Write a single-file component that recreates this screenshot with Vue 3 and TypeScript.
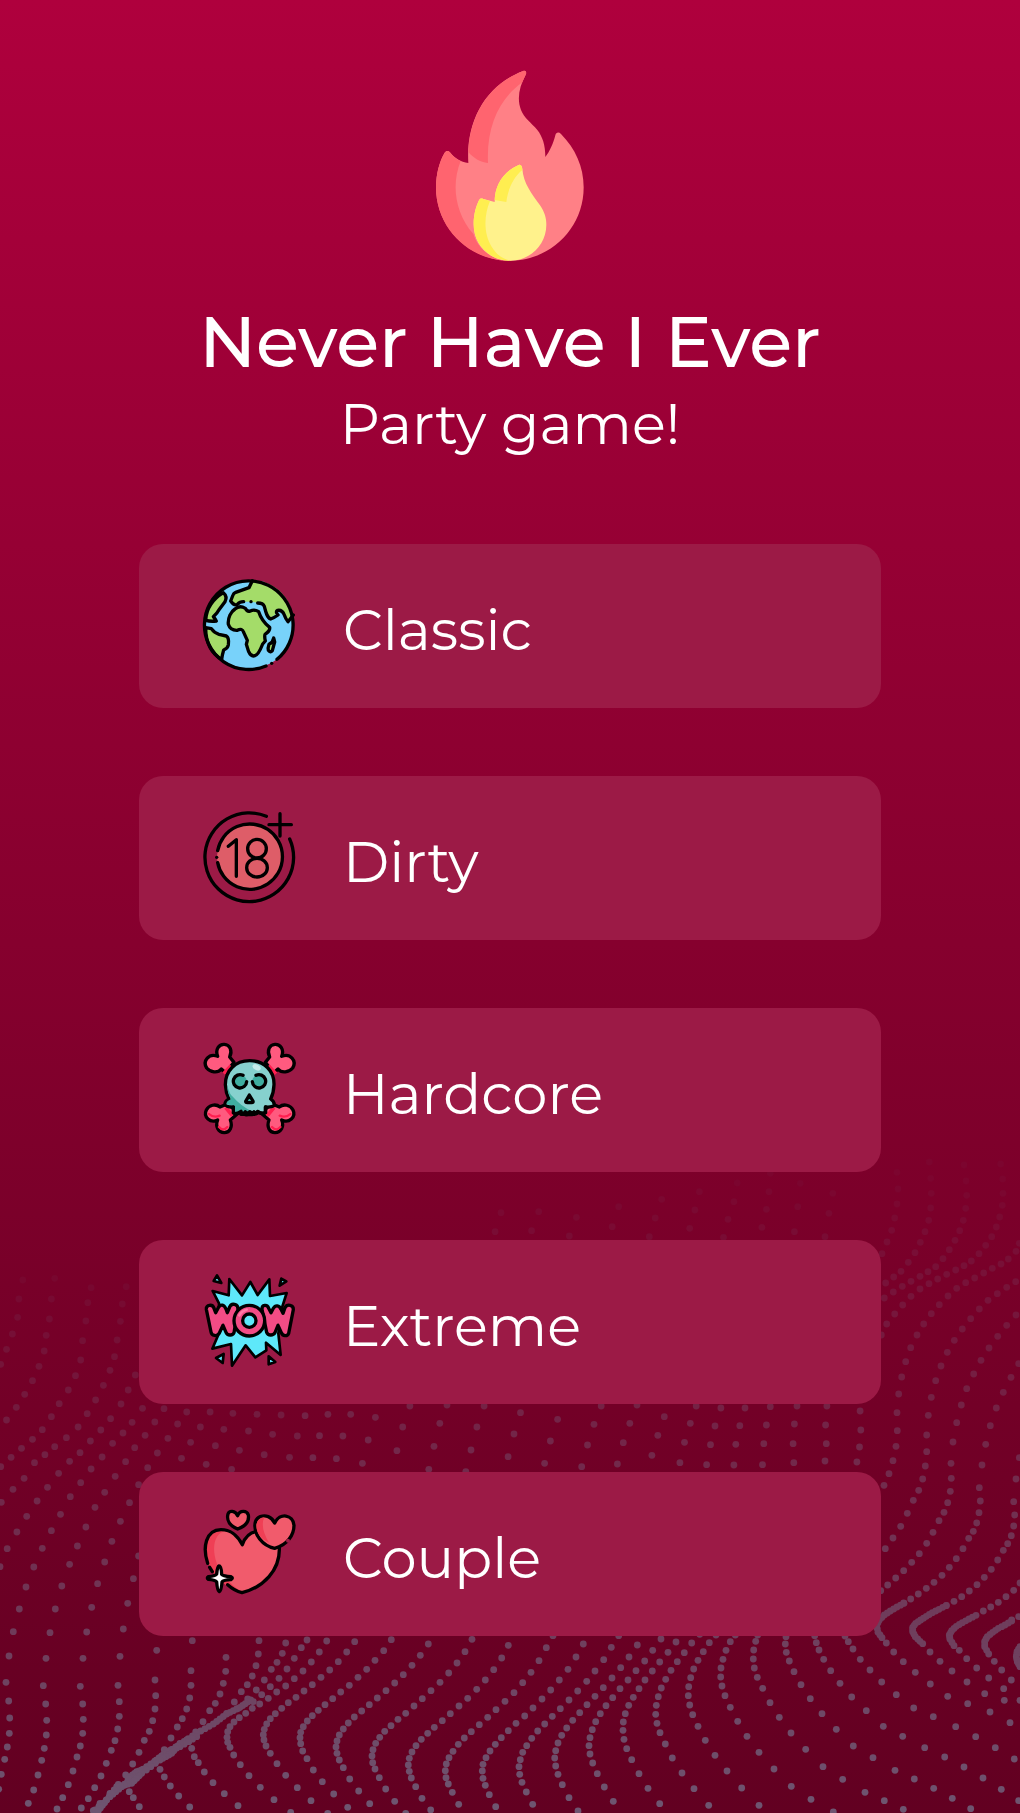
<script setup lang="ts">
interface Mode {
  id: string
  label: string
}

interface Dot {
  x: number
  y: number
  color: string
}

/* A group of dot trails drawn in its own coordinate space. */
interface Patch {
  x: number
  y: number
  sx: number
  sy: number
  steps: number
  trails: string[]
}

const modes: Mode[] = [
  { id: 'classic', label: 'Classic' },
  { id: 'dirty', label: 'Dirty' },
  { id: 'hardcore', label: 'Hardcore' },
  { id: 'extreme', label: 'Extreme' },
  { id: 'couple', label: 'Couple' },
]

const patches: Patch[] = [
  {
    x: 0, y: 600, sx: 3, sy: 3, steps: 1,
    trails: [
      '58,27 40,95 27,168 18,247 26,303 29,354 28,400 22,441 14,478 4,523 -4,568',
      '166,27 150,98 138,175 130,257 137,312 140,361 139,405 133,445 125,481 114,525 101,570 85,610',
      '275,22 260,96 249,175 241,259 248,312 250,358 248,400 241,438 231,471 219,513 205,554 188,593 171,627',
      '383,10 370,87 360,169 354,256 358,305 358,349 353,387 345,422 334,451 319,490 303,528 284,563 265,596 244,624',
      '470,151 465,240 467,287 465,327 458,362 448,394 433,421 417,457 398,492 377,525 355,553 330,580 300,610 280,632',
      '577,122 573,212 573,256 569,294 560,327 547,356 532,381 513,414 493,449 468,483',
      '678,172 677,214 670,250 660,282 646,310 629,332 609,365 587,396 560,420',
      '777,122 775,162 768,197 757,228 742,254 724,275 703,306 680,340',
      '857,129 847,160 831,187 814,208 793,240 769,270 743,297 715,325',
      '921,120 904,143 883,175 861,207 837,235 811,260 785,284 760,305',
      '980,123 958,156 934,186 909,213 883,236 857,258 830,276 805,295 779,312 757,325 737,340 718,353 702,366 690,380 683,395 681,412 683,427 690,442 701,465 721,494 747,527 781,562 822,599 872,637',
      '1064,125 1040,156 1015,185 989,210 963,232 937,254 912,273 888,292 865,308 845,325 826,341 811,356 800,372 793,388 790,404 792,420 798,438 811,460 831,491 857,526 892,563 933,602 983,640',
      '1174,119 1151,152 1125,181 1100,208 1074,232 1048,256 1022,276 998,296 975,314 955,331 937,347 922,363 910,380 902,397 900,413 902,431 908,453 921,476 940,510 967,545 1001,582 1043,622',
      '1285,132 1261,166 1236,196 1210,224 1184,249 1158,272 1132,294 1108,314 1085,333 1063,351 1045,369 1030,387 1018,405 1011,423 1008,441 1011,460 1018,480 1030,503 1049,537 1076,573 1109,611',
      '1416,118 1395,155 1371,189 1346,219 1320,247 1293,272 1267,296 1242,318 1217,340 1194,358 1173,377 1154,394 1139,412 1127,430 1119,449 1116,468 1118,488 1125,507 1138,533 1157,567 1184,604 1217,640',
      '1525,136 1505,174 1481,209 1456,240 1430,268 1403,295 1377,318 1351,341 1327,362 1303,382 1283,400 1264,418 1248,437 1236,456 1228,475 1225,495 1228,514 1234,534 1247,560 1266,595 1292,630',
      '1659,107 1639,143 1617,182 1593,217 1568,248 1542,278 1515,304 1488,329 1463,352 1438,374 1414,395 1393,414 1375,433 1359,454 1347,473 1339,492 1336,512 1338,533 1345,552 1357,577 1376,613',
      '1750,132 1728,171 1704,208 1678,240 1652,270 1626,297 1599,324 1574,348 1548,370 1525,392 1504,413 1486,433 1470,453 1458,473 1449,493 1447,513 1449,535 1456,556 1468,584 1487,620',
      '566,425 575,445 583,470 595,488 613,516 639,548 673,581 714,617',
      '468,483 480,508 493,531 511,558 536,588 569,621',
      '375,555 388,575 400,593 418,620',
    ],
  },
  {
    /* The crest where the trails bunch up into a solid ridge. */
    x: 0, y: 600, sx: 3, sy: 3, steps: 4,
    trails: [
      '752,300 720,322 680,342 640,372 590,400 540,432 490,465 440,500 400,530 365,560 330,590 285,630',
      '590,410 540,440 500,455 470,480 440,505 410,515 385,535',
      '540,430 515,460 480,480 425,520 395,550 350,560 320,600 295,632',
    ],
  },
  {
    x: 510, y: 600, sx: 3, sy: 3, steps: 1,
    trails: [
      '326,107 304,142 281,179 255,213 230,244 203,273 177,300 151,326 127,349 104,372 83,393 65,415 50,437 38,457 31,479 27,500 29,523 36,547 49,576 68,613',
      '382,135 357,171 332,203 306,234 280,263 255,289 231,314 209,338 188,361 170,384 155,406 144,429 137,452 134,474 137,498 144,523 157,554 177,593 204,633',
      '453,117 428,151 404,183 378,212 354,240 330,266 308,293 288,317 271,341 257,365 247,389 240,413 237,437 240,462 248,489 262,521 283,561 310,604',
      '498,126 474,157 449,186 427,213 405,240 387,266 370,292 356,316 346,341 340,366 339,391 342,418 350,446 365,479 387,521 414,565 449,611',
      '569,103 545,129 523,158 502,185 483,211 467,238 454,264 445,290 439,316 437,343 441,370 450,398 466,432 487,474 516,519 552,566 596,616',
      '618,105 598,128 580,155 564,181 551,207 542,233 536,260 535,287 539,315 548,344 564,379 586,421 615,466 651,513 695,564 747,616',
      '676,105 661,125 648,151 639,178 633,204 632,231 636,258 645,287 661,322 683,364 711,409 747,457 792,507 844,559 903,598 970,636',
      '743,105 737,124 731,150 730,177 733,204 742,232 758,265 780,308 808,352 843,399 887,448 939,500 998,538 1065,577 1123,602 1180,628',
      '828,110 826,132 829,157 838,183 852,215 873,254 901,296 936,341 979,388 1030,438 1089,473 1155,511 1213,537 1271,565 1327,595 1382,626',
      '914,107 919,128 927,150 941,178 962,212 990,250 1025,291 1069,332 1120,379 1178,409 1244,443 1304,471 1362,501 1419,534 1474,568 1526,602',
      '1005,108 1015,125 1029,147 1051,178 1080,210 1115,246 1159,284 1211,324 1270,350 1337,380 1397,410 1456,443 1513,477',
      '1129,129 1151,156 1180,185 1216,217 1261,252 1313,289 1373,311 1440,336 1500,368',
      '1238,131 1260,156 1290,184 1326,213 1371,246 1424,281 1483,301 1530,301',
      '1348,151 1370,176 1400,204 1436,234 1481,266',
      '1453,184 1475,210 1504,240',
    ],
  },
  {
    /* Tight bends of the right-hand trails. */
    x: 510, y: 600, sx: 3, sy: 3, steps: 2,
    trails: [
      '1182,10 1161,21 1141,33 1123,45 1108,60 1100,76 1104,97 1116,113',
      '1309,16 1287,28 1267,38 1249,49 1232,60 1217,70 1208,82 1208,95 1216,110 1230,124',
      '1398,46 1377,57 1357,68 1339,79 1325,92 1318,105 1320,118 1332,137',
      '1505,63 1485,75 1465,85 1448,97 1432,110 1424,124 1424,140 1436,162',
      '1530,140 1521,155 1519,170 1522,185 1530,200',
    ],
  },
  {
    x: 870, y: 140, sx: 3, sy: 3, steps: 1,
    trails: [
      '81,97 84,147 81,192 74,234 65,271 51,306 36,341',
      '178,66 182,115 184,160 182,204 176,241 165,275 151,307 135,338 115,367 93,394 71,411 47,429',
      '282,75 288,123 290,166 287,205 280,241 269,272 255,301 238,329 219,356 197,380 174,395 150,409 123,424 97,439 70,456 43,474',
      '392,72 398,117 399,160 397,196 389,231 379,261 365,290 347,316 327,341 304,363 282,377 257,390 230,403 203,417 177,431 150,447 123,469 98,495 74,522 50,552 34,585',
      '448,310 438,334 415,357 393,372 367,385 341,399 314,414 287,428 260,445 234,468 208,494 184,521 161,552 141,585 122,623 107,665 95,711 86,762 81,818 82,872 78,919 69,962 57,1001 42,1036',
      '437,425 410,442 382,461 354,481 328,507 302,536 277,567 253,601 232,637 213,678 197,722 184,772 175,826 170,885 170,935 166,978 158,1017 146,1051 130,1081 112,1120 92,1159 69,1194 46,1226',
      '438,525 410,556 383,589 357,624 333,661 311,702 290,746 274,795 260,848 249,906 243,970 244,1015 241,1054 233,1088 222,1117 207,1142 189,1177 170,1210 148,1241 125,1267 101,1292 77,1314 53,1335 32,1352',
      '446,671 423,712 400,757 379,804 361,857 347,913 336,975 328,1043 331,1083 327,1118 320,1149 310,1174 296,1195 279,1226 259,1256 238,1282 216,1306 192,1327 169,1345 145,1362 122,1377 101,1389',
      '448,953 438,1017 431,1085 434,1125 431,1158 424,1187 413,1211 400,1231 383,1260 364,1288 343,1312 321,1334 298,1353 275,1370 252,1384 229,1397',
      '450,1329 431,1351 408,1370 385,1387 362,1401 340,1413',
      '446,1430 425,1440',
    ],
  },
  {
    x: 0, y: 150, sx: 1.537, sy: 3, steps: 1,
    trails: [
      '35,390 29,447 27,502 19,552 10,598 1,643',
      '84,385 79,447 76,507 71,556 68,603 60,649 50,692 38,733 25,772 10,810',
      '140,413 135,458 132,513 127,572 124,630 116,677 105,720 91,761 79,800 65,839 50,868 33,895 17,922 1,950',
      '194,410 188,462 185,514 180,570 176,620 169,661 159,706 147,750 134,791 120,831 102,863 84,890 69,914 53,938 37,985 20,1018 2,1057',
      '208,675 197,720 186,762 170,806 155,840 139,873 123,908 107,934 90,970 73,1012 57,1053 41,1099 26,1146 11,1196 0,1250',
      '219,775 203,817 189,849 173,880 157,921 140,957 124,998 108,1040 93,1093 79,1142 65,1195 52,1251 40,1311',
      '252,776 238,816 223,856 207,893 193,935 177,979 161,1027 146,1072 132,1131 119,1188 107,1243 95,1308',
      '287,786 273,822 258,865 242,909 227,953 213,1004 199,1058 185,1114 172,1174 161,1236 150,1301',
      '323,786 308,831 293,877 279,925',
      '213,1218 205,1286',
      '358,790 344,838 331,887 317,943',
      '395,793 382,843 368,901 356,958',
      '432,795 419,853 406,914',
      '469,797 457,858 445,922',
      '504,793 491,857 481,923',
      '539,793 527,858 517,926',
      '577,802 566,870 557,940',
      '630,768 619,831 610,902',
      '687,765 676,820 667,889 659,958',
      '744,768 733,831 724,900 716,965',
      '800,788 790,852 781,920',
      '857,808 846,873 837,940',
      '924,768 913,823 903,885 894,950',
      '979,765 968,820 958,878 949,942',
      '1021,800 1011,856 1002,916',
      '1070,768 1061,820 1052,877 1045,938',
      '1108,774 1099,828 1092,884 1086,944',
      '1145,774 1137,827 1131,883 1128,945',
      '1184,770 1178,825 1174,881 1172,944',
      '1225,768 1221,822 1219,881 1220,938',
      '1271,768 1269,825 1270,881 1268,933',
      '1322,783 1323,840 1321,891 1317,936',
      '1184,70 1182,125 1178,178 1171,232',
      '1133,99 1128,155 1119,208 1112,262',
      '1075,125 1068,180 1060,235',
      '1017,148 1007,204 998,260',
      '951,170 941,230',
      '886,202 875,258',
      '828,185 817,242',
      '770,188 761,245',
      '1230,100 1226,170 1221,245',
      '1280,130 1274,190 1268,260',
    ],
  },
]

/* Opaque tint between the backdrop and slate blue, so that overlapping dots keep one tone. */
function tint(x: number, y: number): string {
  const start = x < 300 ? 230 : 140
  const o = Math.min(0.56, Math.max(0.03, ((y - start) / (800 - start)) * 0.54))
  const t = Math.min(1, Math.max(0, y / 813))
  const back = [131 - 33 * t, 0, 45 - 12 * t]
  const slate = [120, 155, 178]
  return `rgb(${back.map((c, i) => Math.round(c + (slate[i] - c) * o)).join(',')})`
}

function buildDots(): Dot[] {
  const dots: Dot[] = []
  for (const p of patches) {
    for (const trail of p.trails) {
      const pts = trail.split(' ').map((pair) => {
        const [x, y] = pair.split(',').map(Number)
        return { x: p.x + x / p.sx, y: p.y + y / p.sy }
      })
      pts.forEach((a, i) => {
        const b = pts[i + 1]
        const n = b ? p.steps : 1
        for (let k = 0; k < n; k++) {
          const t = k / n
          const x = b ? a.x + (b.x - a.x) * t : a.x
          const y = b ? a.y + (b.y - a.y) * t : a.y
          dots.push({ x: Math.round(x * 10) / 10, y: Math.round(y * 10) / 10, color: tint(x, y) })
        }
      })
    }
  }
  return dots
}

const dots = buildDots()
</script>

<template>
  <div class="screen">
    <svg class="waves" viewBox="0 0 1020 813" aria-hidden="true">
      <circle v-for="(d, i) in dots" :key="i" :cx="d.x" :cy="d.y" r="3.4" :fill="d.color" />
    </svg>

    <main class="content">
      <header class="hero">
        <svg class="flame" viewBox="0 0 540 630" aria-hidden="true">
          <path fill="#ff8086" d="M270 602C150 602 48 505 48 382C48 342 58 305 74 278C79 271 86 272 91 278C104 294 122 306 145 309C137 180 200 74 310 33C317 31 321 37 317 44C298 80 290 115 303 150C312 174 334 188 352 210C368 230 376 256 376 291C389 275 400 250 406 226C408 217 416 215 423 222C466 266 491 320 491 382C491 505 392 602 270 602Z" />
          <path fill="#ff646f" d="M74 278C79 271 86 272 91 278C99 288 109 297 122 303C95 370 102 455 160 522C175 570 215 597 262 602C146 600 48 505 48 382C48 342 58 305 74 278Z" />
          <path fill="#ff646f" d="M145 276C150 160 210 70 310 33C317 31 321 37 317 44L307 67C240 115 199 195 204 309C180 306 160 294 145 276Z" />
          <path fill="#fff28c" d="M270 602C208 602 161 555 161 493C161 463 168 440 177 421C180 415 184 415 190 417L224 426C224 375 250 335 296 315C302 313 306 318 307 326C310 370 335 400 360 436C374 456 379 475 379 494C379 555 330 602 270 602Z" />
          <path fill="#ffee50" d="M177 421C180 415 184 415 190 417L210 423C192 465 190 520 215 560C230 584 248 599 276 602C210 604 161 555 161 493C161 463 168 440 177 421ZM224 420C226 372 252 334 296 315C302 313 306 318 307 330C282 350 264 385 259 426Z" />
        </svg>
        <h1 class="title">Never Have I Ever</h1>
        <p class="subtitle">Party game!</p>
      </header>

      <nav class="modes" aria-label="Game modes">
        <button v-for="mode in modes" :key="mode.id" type="button" class="mode">
          <svg v-if="mode.id === 'classic'" class="icon" viewBox="0 0 330 330" aria-hidden="true">
            <circle cx="163" cy="166" r="133" fill="#78d2fa" />
            <g fill="#a4dc69" class="ink">
              <path d="M172 35L160 58L118 72L108 96L116 108Q128 98 148 98L168 98L190 102Q204 104 209 122L222 150L240 137Q250 133 244 122Q262 122 268 142L280 160L295 150C288 85 240 35 172 35Z" stroke="none" />
              <path d="M172 35L162 56L122 70Q116 72 114 78L107 96Q118 112 127 106Q134 98 146 98M188 102Q204 102 208 112C212 128 216 146 227 150Q238 146 249 138Q240 128 248 124Q262 122 268 138Q272 150 279 158L295 138" fill="none" />
              <path d="M85 71Q98 82 90 98L72 122Q67 132 55 143Q60 149 64 156Q46 158 32 154C34 120 54 90 85 71Z" />
              <path d="M32 176L49 179Q58 192 72 196L94 201Q103 206 100 228Q98 238 86 243Q82 256 80 271C48 252 32 220 32 176Z" />
              <path d="M120 120Q134 108 151 118Q157 130 166 126Q178 120 191 128Q200 156 224 175Q226 186 210 196Q208 204 211 216L203 225Q190 258 180 260Q168 264 161 248L154 226L157 214L146 190Q142 176 127 184Q106 185 100 166C98 146 108 128 120 120Z" />
              <path d="M236 207L239 219L232 245Q226 252 220 244Q218 238 222 226Q234 220 236 207Z" />
            </g>
            <path class="ink" fill="none" d="M213 291A133 133 0 1 1 246 271" />
            <circle cx="230" cy="283" r="5" />
            <circle cx="168" cy="98" r="5" />
          </svg>

          <svg v-else-if="mode.id === 'dirty'" class="icon" viewBox="2 2 330 330" aria-hidden="true">
            <circle cx="166" cy="171" r="98" fill="#de5d68" />
            <path class="ink" fill="none" d="M216 48A133 133 0 1 0 286 116M70 151A98 98 0 1 1 70 187M257 40V107M224 73H291M102 138L126 118V228" />
            <g class="ink" fill="none">
              <ellipse cx="188" cy="145" rx="28" ry="28" />
              <ellipse cx="188" cy="202" rx="31" ry="28" />
            </g>
            <circle cx="67" cy="171" r="5" />
          </svg>

          <svg v-else-if="mode.id === 'hardcore'" class="icon" viewBox="0 0 330 330" aria-hidden="true">
            <path fill="#ff5a7f" class="ink" d="M68 70C60 50 72 33 88 34C105 35 113 53 104 72L117 88L92 120L79 108C68 122 46 118 35 105C22 84 42 59 68 70Z" />
            <path fill="#ff5a7f" class="ink" d="M260 70C268 50 256 33 240 34C223 35 215 53 224 72L211 88L236 120L249 108C260 122 282 118 293 105C306 84 286 59 260 70Z" />
            <path fill="#ff5a7f" class="ink" d="M68 261C60 281 70 298 88 299C104 299 114 282 106 261L130 240L98 212L75 222C62 211 42 216 34 231C24 252 46 272 68 261Z" />
            <path fill="#ff5a7f" class="ink" d="M260 261C268 281 258 298 240 299C224 299 214 282 222 261L198 240L230 212L253 222C266 211 286 216 294 231C304 252 282 272 260 261Z" />
            <path fill="none" stroke="#ff1f50" stroke-width="7" stroke-linecap="round" d="M42 243Q56 256 74 248M72 282Q84 296 97 282M286 243Q272 256 254 248M256 282Q244 296 231 282" />
            <path fill="none" stroke="#ff1f50" stroke-width="11" d="M92 224L112 248M237 224L217 248M86 122L108 98M243 122L220 98" />
            <path fill="#86d1ce" class="ink" d="M164 83C208 83 238 114 237 155Q236 180 227 198Q240 207 237 217Q234 223 211 222V239Q200 243 188 237Q176 242 164 236Q151 242 140 237Q127 243 116 239V222Q94 223 90 214Q90 204 102 198Q92 178 91 155C91 114 120 83 164 83Z" />
            <path fill="#3faea0" d="M97 158Q104 184 112 190Q140 222 170 234L120 236V218L94 214Q94 204 108 199Q96 178 97 158Z" />
            <ellipse cx="185" cy="103" rx="13" ry="8" fill="#c5ecea" transform="rotate(28 185 103)" />
            <g fill="#3faea0">
              <circle cx="135" cy="145" r="20" />
              <circle cx="192" cy="145" r="20" />
              <path class="ink" d="M163 186L152 205Q152 209 157 209L170 209Q176 209 174 204Z" />
            </g>
            <path class="ink" fill="none" d="M144 127A20 20 0 1 0 155 146M183 127A20 20 0 1 1 172 146" />
            <path class="ink" fill="none" d="M115 222V240Q123 246 138 235V244Q152 246 151 236V245Q164 248 164 236V245Q178 246 177 236V244Q190 244 188 235Q200 246 212 239V222" />
          </svg>

          <svg v-else-if="mode.id === 'extreme'" class="icon" viewBox="0 0 330 330" aria-hidden="true">
            <path fill="#5ee8fa" class="ink ink-thin" d="M72 115L53 78L101 91L103 42L141 91L166 51L188 90L223 43L225 93L275 84L262 125L250 205L257 270L213 233L214 256L181 277L152 241L111 302L108 237L52 251L72 205Z" />
            <g fill="#5ee8fa" class="ink ink-thin">
              <path d="M66 31L79 54L56 48Z" />
              <path d="M259 41L274 49L254 62Z" />
              <path d="M86 267L83 294L63 279Z" />
              <path d="M221 274L241 291L221 298Z" />
            </g>
            <path fill="#f24c85" class="ink" d="M34 133C32 119 53 116 57 130L62 143L70 128C77 116 87 119 93 132L97 143L104 126C109 113 130 116 129 133L117 203C113 213 97 212 93 202L84 181L72 206C66 215 50 213 48 201Z" />
            <path fill="#f24c85" class="ink" d="M201 133C200 119 217 117 221 130L228 143L235 130C241 119 253 120 258 133L264 145L270 128C276 116 296 119 295 134L281 205C277 215 263 214 259 203L249 181L240 203C234 213 219 212 215 202Z" />
            <circle cx="163" cy="167" r="46" fill="#f24c85" class="ink" />
            <circle cx="163" cy="167" r="20" fill="#5ee8fa" class="ink" />
            <path fill="none" stroke="#ff78a4" stroke-width="8" stroke-linecap="round" d="M133 151Q140 138 155 134" />
          </svg>

          <svg v-else class="icon" viewBox="0 0 330 330" aria-hidden="true">
            <path fill="#f15b6c" d="M142 143C129 109 104 96 77 98C44 102 28 132 32 162C36 216 82 269 141 287C215 267 264 205 254 140C245 108 218 92 183 103C163 108 150 122 142 143Z" />
            <path fill="#ef3f55" d="M94 101C44 108 48 190 89 240Q112 266 141 287C70 265 32 210 31 157C28 110 57 91 94 101Z" />
            <path class="ink" fill="none" d="M38 199C22 151 32 99 78 98C112 98 129 119 142 143C150 121 166 107 183 104M253 151C256 220 205 271 141 287Q118 281 98 263M44 211L52 224" />
            <path fill="#f15b6c" class="ink" d="M239 78C230 58 211 53 196 59C174 68 175 101 194 126Q211 148 239 154C278 144 297 113 297 85C295 53 254 45 239 78Z" />
            <path fill="#ef3f55" d="M208 61Q194 90 222 137C194 124 183 104 184 82Q190 61 208 61Z" />
            <path fill="#f15b6c" class="ink" d="M128 56C120 40 103 40 99 51C94 70 105 87 128 96C150 88 163 73 160 54C155 40 135 39 128 56Z" />
            <circle cx="279" cy="131" r="6" fill="#9c1a46" />
            <path fill="#fff" class="ink" d="M72 207Q79 207 80 232Q83 237 108 239Q116 243 108 248Q85 249 81 255Q79 282 73 284Q67 282 65 255Q62 249 40 247Q34 243 40 239Q62 237 65 231Q67 208 72 207Z" />
          </svg>
          <span class="label">{{ mode.label }}</span>
        </button>
      </nav>
    </main>
  </div>
</template>

<style>
body {
  margin: 0;
  background: #640022;
}
</style>

<style scoped>
.screen {
  position: relative;
  min-height: 100vh;
  overflow: hidden;
  background: linear-gradient(#af003d 0%, #960034 30%, #7e002b 63%, #620021 100%);
  color: #fff;
  font-family: Montserrat, Lato, sans-serif;
}

.waves {
  position: absolute;
  left: 0;
  bottom: 0;
  width: 100%;
}

.content {
  position: relative;
  max-width: 742px;
  margin: 0 auto;
  padding: 60px 24px;
}

.hero {
  display: flex;
  flex-direction: column;
  align-items: center;
}

.flame {
  width: 180px;
  height: 210px;
}

.title {
  margin: 28px 0 0;
  font-size: 70px;
  line-height: 88px;
  font-weight: 500;
  text-align: center;
}

.subtitle {
  margin: 0;
  font-size: 56px;
  line-height: 76px;
  font-weight: 400;
}

.modes {
  display: flex;
  flex-direction: column;
  gap: 68px;
  margin-top: 82px;
}

.mode {
  display: flex;
  align-items: center;
  gap: 38px;
  padding: 25px 56px 29px;
  border: 0;
  border-radius: 24px;
  background: #9c1a46;
  color: inherit;
  font: inherit;
  text-align: left;
  cursor: pointer;
}

.icon {
  flex: none;
  width: 110px;
  height: 110px;
}

.ink {
  stroke: #000;
  stroke-width: 10px;
  stroke-linecap: round;
  stroke-linejoin: round;
}

.ink-thin {
  stroke-width: 8px;
}

.label {
  padding-top: 12px;
  font-size: 56px;
  line-height: 72px;
}
</style>
